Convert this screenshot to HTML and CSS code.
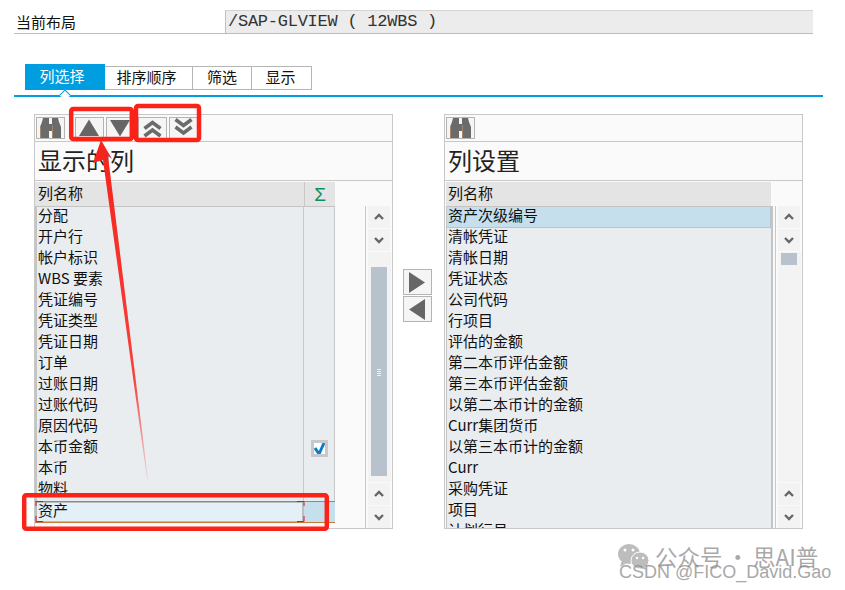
FILE: index.html
```html
<!DOCTYPE html>
<html lang="zh">
<head>
<meta charset="utf-8">
<title>当前布局</title>
<link rel="stylesheet" href="styles.css">
</head>
<body>
<svg class="defs" width="0" height="0">
  <symbol id="bino" viewBox="0 0 27 20">
    <path fill="#6b6b6b" d="M6 0h6v6h3V0h6l1 4 2 5v11h-9v-7h-3v7H3V9l2-5z"/>
    <path fill="#a5886a" d="M3 9h1v11H3zM15 7h1v13h-1z"/>
  </symbol>
  <symbol id="up2" viewBox="0 0 27 20">
    <path fill="none" stroke="#6b6b6b" stroke-width="3.600" d="M5.500 10.500l8-6 8 6M5.500 18l8-6 8 6"/>
  </symbol>
  <symbol id="down2" viewBox="0 0 27 20">
    <path fill="none" stroke="#6b6b6b" stroke-width="3.600" d="M5.500 1.500l8 6 8-6M5.500 9l8 6 8-6"/>
  </symbol>
  <symbol id="chev-up" viewBox="0 0 22 22">
    <path fill="none" stroke="#666" stroke-width="2.400" d="M7 13l4-4 4 4"/>
  </symbol>
  <symbol id="chev-down" viewBox="0 0 22 22">
    <path fill="none" stroke="#666" stroke-width="2.400" d="M7 9l4 4 4-4"/>
  </symbol>
</svg>

<header class="layout-row">
  <div class="layout-label">当前布局</div>
  <div class="layout-field">/SAP-GLVIEW ( 12WBS )</div>
</header>

<nav class="tabs">
  <div class="tab tab-active">列选择</div>
  <div class="tab tab-sort">排序顺序</div>
  <div class="tab tab-filter">筛选</div>
  <div class="tab tab-show">显示</div>
</nav>
<div class="tab-rule"><span class="tab-notch"></span></div>

<main class="columns">
  <section class="panel">
    <div class="toolbar">
      <button class="tool"><svg class="ico"><use href="#bino"/></svg></button>
      <span class="tool-gap"></span>
      <button class="tool"><svg class="ico" viewBox="0 0 27 20"><path fill="#666" d="M13 1.500L23 18H3z"/></svg></button>
      <button class="tool"><svg class="ico" viewBox="0 0 27 20"><path fill="#666" d="M3 2h20L13 18.500z"/></svg></button>
      <button class="tool tool-next"><svg class="ico"><use href="#up2"/></svg></button>
      <button class="tool"><svg class="ico"><use href="#down2"/></svg></button>
    </div>
    <h2 class="panel-title">显示的列</h2>
    <div class="head-row head-row-left">
      <div class="head-name">列名称</div>
      <div class="head-sum">Σ</div>
    </div>
    <div class="body-row">
      <div class="list-wrap">
        <div class="list list-left">
          <div class="row"><span class="name">分配</span><span class="sum"></span></div>
          <div class="row"><span class="name">开户行</span><span class="sum"></span></div>
          <div class="row"><span class="name">帐户标识</span><span class="sum"></span></div>
          <div class="row"><span class="name">WBS 要素</span><span class="sum"></span></div>
          <div class="row"><span class="name">凭证编号</span><span class="sum"></span></div>
          <div class="row"><span class="name">凭证类型</span><span class="sum"></span></div>
          <div class="row"><span class="name">凭证日期</span><span class="sum"></span></div>
          <div class="row"><span class="name">订单</span><span class="sum"></span></div>
          <div class="row"><span class="name">过账日期</span><span class="sum"></span></div>
          <div class="row"><span class="name">过账代码</span><span class="sum"></span></div>
          <div class="row"><span class="name">原因代码</span><span class="sum"></span></div>
          <div class="row"><span class="name">本币金额</span><span class="sum"><span class="check"><svg viewBox="0 0 17 17" width="17" height="17"><path fill="none" stroke="#0a7cc4" stroke-width="3" d="M4 8l4 6 5-11"/></svg></span></span></div>
          <div class="row"><span class="name">本币</span><span class="sum"></span></div>
          <div class="row"><span class="name">物料</span><span class="sum"></span></div>
        </div>
        <div class="row row-current"><span class="name name-current">资产</span><span class="sum sum-current"></span></div>
      </div>
      <div class="scroll">
        <button class="sbtn"><svg class="sico"><use href="#chev-up"/></svg></button>
        <button class="sbtn"><svg class="sico"><use href="#chev-down"/></svg></button>
        <div class="track"><div class="thumb thumb-left"><span class="grip"></span></div></div>
        <button class="sbtn"><svg class="sico"><use href="#chev-up"/></svg></button>
        <button class="sbtn"><svg class="sico"><use href="#chev-down"/></svg></button>
      </div>
    </div>
  </section>

  <div class="transfer">
    <button class="move"><svg viewBox="0 0 29 25" width="29" height="25"><path fill="#666" d="M6 2l16 10.500L6 23z"/></svg></button>
    <button class="move"><svg viewBox="0 0 29 25" width="29" height="25"><path fill="#666" d="M22 2L6 12.500 22 23z"/></svg></button>
  </div>

  <section class="panel">
    <div class="toolbar">
      <button class="tool"><svg class="ico"><use href="#bino"/></svg></button>
    </div>
    <h2 class="panel-title">列设置</h2>
    <div class="head-row">
      <div class="head-name head-wide">列名称</div>
    </div>
    <div class="body-row">
      <div class="list-wrap">
        <div class="list list-right">
          <div class="row row-sel"><span class="name">资产次级编号</span></div>
          <div class="row"><span class="name">清帐凭证</span></div>
          <div class="row"><span class="name">清帐日期</span></div>
          <div class="row"><span class="name">凭证状态</span></div>
          <div class="row"><span class="name">公司代码</span></div>
          <div class="row"><span class="name">行项目</span></div>
          <div class="row"><span class="name">评估的金额</span></div>
          <div class="row"><span class="name">第二本币评估金额</span></div>
          <div class="row"><span class="name">第三本币评估金额</span></div>
          <div class="row"><span class="name">以第二本币计的金额</span></div>
          <div class="row"><span class="name">Curr集团货币</span></div>
          <div class="row"><span class="name">以第三本币计的金额</span></div>
          <div class="row"><span class="name">Curr</span></div>
          <div class="row"><span class="name">采购凭证</span></div>
          <div class="row"><span class="name">项目</span></div>
          <div class="row"><span class="name">计划行号</span></div>
        </div>
      </div>
      <div class="scroll">
        <button class="sbtn"><svg class="sico"><use href="#chev-up"/></svg></button>
        <button class="sbtn"><svg class="sico"><use href="#chev-down"/></svg></button>
        <div class="track"><div class="thumb thumb-right"></div></div>
        <button class="sbtn"><svg class="sico"><use href="#chev-up"/></svg></button>
        <button class="sbtn"><svg class="sico"><use href="#chev-down"/></svg></button>
      </div>
    </div>
  </section>
</main>

<svg class="annot" width="845" height="590" viewBox="0 0 845 590">
  <defs>
    <linearGradient id="fade" gradientUnits="userSpaceOnUse" x1="0" y1="140" x2="0" y2="480">
      <stop offset="0" stop-color="#f5231a"/>
      <stop offset="0.7" stop-color="#f8403a"/>
      <stop offset="1" stop-color="#f8403a" stop-opacity="0.1"/>
    </linearGradient>
  </defs>
  <path fill="url(#fade)" d="M101 140L112 159 108 156 148 479 147 479 103 160 93 163z"/>
  <g fill="none" stroke="#fb2218" stroke-width="4.500">
    <rect x="71.200" y="109" width="60.600" height="30" rx="2"/>
    <rect x="136" y="106" width="63" height="34" rx="2"/>
    <rect x="24.200" y="495.200" width="302.600" height="33.600" rx="2"/>
  </g>
  <g fill="none" stroke="#e0121a" stroke-width="1">
    <path d="M43 501.500H36V506M36 516V521.500H43M297 501.500H304V506M304 516V521.500H297"/>
  </g>
  <g fill="#bdbdbd">
    <ellipse cx="629" cy="554" rx="11" ry="10"/>
    <path d="M622 560l-2 7 7-4z"/>
    <ellipse cx="640" cy="560.500" rx="9" ry="8.500" stroke="#fff" stroke-width="1"/>
    <path d="M644 566l3 4-7-2z"/>
  </g>
  <g fill="#fff">
    <circle cx="625" cy="550" r="1.500"/><circle cx="633" cy="550" r="1.500"/>
    <circle cx="637" cy="558" r="1.200"/><circle cx="643" cy="558" r="1.200"/>
  </g>
</svg>
<div class="wm wm-a">公众号 · 思AI普</div>
<div class="wm wm-b">CSDN @FICO_David.Gao</div>
</body>
</html>
```

FILE: styles.css
```css
* { box-sizing: border-box; }
html, body { margin: 0; padding: 0; }
body {
  position: relative;
  width: 845px;
  height: 590px;
  overflow: hidden;
  background: #fff;
  color: #111;
  font-family: "Noto Sans CJK SC", "Liberation Sans", sans-serif;
  font-size: 15px;
}
.defs { position: absolute; }
button { padding: 0; margin: 0; font: inherit; display: block; }

.layout-row { display: flex; height: 24px; margin: 10px 32px 0 14px; }
.layout-label {
  width: 211px;
  padding: 1px 0 0 2px;
  line-height: 21px;
  border-bottom: 1px solid #bcbcbc;
}
.layout-field {
  flex: 1;
  background: #ececec;
  border-left: 1px solid #c0c0c0;
  border-top: 1px solid #d4d4d4;
  border-bottom: 1px solid #bcbcbc;
  padding-left: 2px;
  font-family: "Liberation Mono", monospace;
  font-size: 17px;
  letter-spacing: -0.25px;
  line-height: 21px;
  color: #333;
  white-space: pre;
}

.tabs { display: flex; align-items: flex-end; height: 26px; margin: 30px 0 0 25px; }
.tab {
  height: 24px;
  line-height: 20px;
  text-align: center;
  background: #fff;
  border: 1px solid #b5b5b5;
  border-left: 0;
}
.tab-active {
  width: 80px;
  height: 26px;
  line-height: 24px;
  padding-right: 6px;
  background: #009de0;
  color: #fff;
  border: 0;
}
.tab-sort { width: 88px; padding-right: 4px; }
.tab-filter { width: 59px; }
.tab-show { width: 60px; padding-right: 2px; }
.tab-rule {
  position: relative;
  height: 2px;
  margin: 5px 22px 0 14px;
  background: #009de0;
}
.tab-notch {
  position: absolute;
  left: 47px;
  top: -4px;
  width: 8px;
  height: 8px;
  background: #fff;
  border-top: 1px solid #009de0;
  border-left: 1px solid #009de0;
  transform: rotate(45deg);
}

.columns { display: flex; align-items: flex-start; margin: 17px 0 0 34px; }
.panel {
  width: 359px;
  height: 415px;
  border: 1px solid #c8c8c8;
  background: #fafafa;
  display: flex;
  flex-direction: column;
}
.toolbar {
  display: flex;
  height: 27px;
  padding: 2px 0 0 1px;
  gap: 2px;
  border-bottom: 1px solid #c8c8c8;
  flex: none;
}
.tool {
  width: 29px;
  height: 22px;
  background: #f5f5f5;
  border: 1px solid #b4b4b4;
}
.tool-next { margin-left: 1px; }
.tool-gap { width: 6px; }
.ico { display: block; width: 27px; height: 20px; }
.panel-title {
  margin: 0;
  height: 39px;
  flex: none;
  padding-left: 3px;
  font-size: 24px;
  font-weight: 400;
  line-height: 35px;
  border-bottom: 1px solid #c8c8c8;
  color: #222;
}
.head-row { display: flex; height: 25px; flex: none; padding: 1px 0 0 1px; }
.head-row-left { padding-left: 0; }
.head-name {
  width: 270px;
  background: #e4e4e4;
  padding-left: 3px;
  line-height: 21px;
  border-right: 1px solid #c8c8c8;
}
.head-wide { width: 325px; padding-left: 2px; border-right: 0; }
.head-sum {
  width: 30px;
  background: #e4e4e4;
  color: #0a9060;
  text-align: center;
  font-size: 19px;
  line-height: 25px;
  font-family: "Liberation Sans", sans-serif;
}

.body-row { display: flex; flex: 1; min-height: 0; }
.list-wrap {
  width: 331px;
  border-right: 1px solid #c8c8c8;
  display: flex;
  flex-direction: column;
  min-height: 0;
}
.list { overflow: hidden; border-top: 1px solid #c4c4c4; }
.list-left {
  width: 300px;
  height: 295px;
  background: #e9edf0;
  border-left: 2px solid #c4c4c4;
  border-right: 1px solid #c8c8c8;
}
.list-right {
  width: 327px;
  flex: 1;
  margin-left: 1px;
  background: #e9edf0;
  border-right: 2px solid #c4c4c4;
  border-left: 1px solid #c4c4c4;
}
.row { display: flex; height: 21px; line-height: 16px; }
.name { flex: 1; padding-left: 1px; white-space: nowrap; }
.sum {
  width: 31px;
  border-left: 1px solid #c8c8c8;
  display: flex;
  align-items: center;
  justify-content: center;
}
.check {
  width: 17px;
  height: 17px;
  background: #fff;
  outline: 3px solid #c8c8c8;
  outline-offset: -3px;
  display: block;
}
.check svg { display: block; }
.row-sel { background: #c5dfec; border-bottom: 1px solid #b8c4cc; border-right: 1px solid #b8c4cc; }
.row-current {
  width: 300px;
  height: 22px;
  border-top: 1px solid #c87a3c;
  border-bottom: 1px solid #c87a3c;
}
.name-current {
  background: #e3f0f8;
  border: 1px solid #bdbdbd;
  border-width: 1px 2px;
  line-height: 14px;
  padding-left: 1px;
}
.sum-current { background: #c5dfec; border-left: 0; }

.scroll {
  width: 23px;
  margin-left: 2px;
  display: flex;
  flex-direction: column;
  gap: 1px;
}
.sbtn {
  width: 22px;
  height: 22px;
  flex: none;
  background: #f3f3f3;
  border: 0;
}
.sico { display: block; width: 22px; height: 22px; }
.track { flex: 1; background: #f3f3f3; padding: 0 3px; min-height: 0; }
.thumb { width: 16px; background: #b8c2cc; position: relative; }
.thumb-left { height: 209px; margin-top: 15px; }
.thumb-right { height: 12px; margin-top: 1px; }
.grip {
  position: absolute;
  left: 6px;
  top: 102px;
  width: 4px;
  height: 7px;
  background: repeating-linear-gradient(#eef1f4 0 1px, transparent 1px 2px);
}

.transfer {
  width: 51px;
  padding: 155px 0 0 10px;
  display: flex;
  flex-direction: column;
  gap: 1px;
}
.move {
  width: 29px;
  height: 26px;
  background: #f5f5f5;
  border: 1px solid #b4b4b4;
}
.move svg { display: block; margin: -1px; }

.annot { position: absolute; left: 0; top: 0; pointer-events: none; }
.wm { position: absolute; color: #8c8c8c; opacity: 0.75; white-space: nowrap; }
.wm-a { left: 655px; top: 539px; font-size: 22.500px; line-height: 34px; word-spacing: -1px; }
.wm-b { left: 619px; top: 561px; font-family: "Liberation Sans", sans-serif; font-size: 18px; line-height: 22px; }
```
